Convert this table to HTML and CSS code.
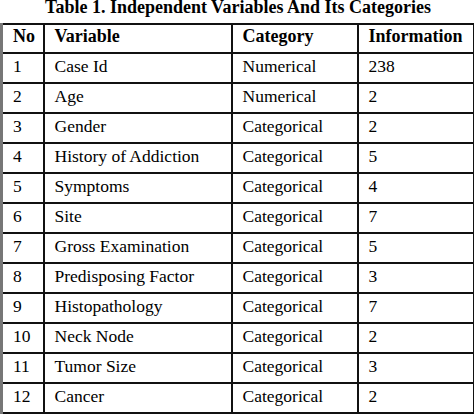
FILE: index.html
```html
<!DOCTYPE html>
<html>
<head>
<meta charset="utf-8">
<link rel="stylesheet" href="styles.css">
</head>
<body>
<div class="title">Table 1. Independent Variables And Its Categories</div>
<table class="vars">
  <colgroup>
    <col class="c-no"><col class="c-var"><col class="c-cat"><col class="c-info">
  </colgroup>
  <thead>
    <tr><th>No</th><th>Variable</th><th>Category</th><th>Information</th></tr>
  </thead>
  <tbody>
    <tr><td>1</td><td>Case Id</td><td>Numerical</td><td>238</td></tr>
    <tr><td>2</td><td>Age</td><td>Numerical</td><td>2</td></tr>
    <tr><td>3</td><td>Gender</td><td>Categorical</td><td>2</td></tr>
    <tr><td>4</td><td>History of Addiction</td><td>Categorical</td><td>5</td></tr>
    <tr><td>5</td><td>Symptoms</td><td>Categorical</td><td>4</td></tr>
    <tr><td>6</td><td>Site</td><td>Categorical</td><td>7</td></tr>
    <tr><td>7</td><td>Gross Examination</td><td>Categorical</td><td>5</td></tr>
    <tr><td>8</td><td>Predisposing Factor</td><td>Categorical</td><td>3</td></tr>
    <tr><td>9</td><td>Histopathology</td><td>Categorical</td><td>7</td></tr>
    <tr><td>10</td><td>Neck Node</td><td>Categorical</td><td>2</td></tr>
    <tr><td>11</td><td>Tumor Size</td><td>Categorical</td><td>3</td></tr>
    <tr><td>12</td><td>Cancer</td><td>Categorical</td><td>2</td></tr>
  </tbody>
</table>
</body>
</html>
```
FILE: styles.css
```css
html, body {
  margin: 0;
  padding: 0;
  background: #ffffff;
}
body {
  font-family: "Liberation Serif", "Times New Roman", serif;
  color: #000;
  width: 474px;
  height: 415px;
  overflow: hidden;
}
.title {
  height: 23px;
  font-size: 18px;
  line-height: 15px;
  font-weight: bold;
  text-align: center;
  padding-left: 2px;
}
.vars {
  border-collapse: collapse;
  table-layout: fixed;
  width: 472px;
  margin-left: 0;
}
.c-no { width: 42px; }
.c-var { width: 188px; }
.c-cat { width: 126px; }
.c-info { width: 116px; }
.vars th, .vars td {
  border: 2px solid #111;
  text-align: left;
  vertical-align: top;
  padding: 0 0 0 10px;
  white-space: nowrap;
  overflow: hidden;
}
.vars th {
  font-size: 18px;
  font-weight: bold;
  line-height: 20px;
  height: 26px;
  padding-top: 1px;
}
.vars td {
  font-size: 17.5px;
  line-height: 20px;
  height: 26px;
  padding-top: 2px;
}
.vars tr > :first-child {
  border-left: 3px solid #777;
}
```
